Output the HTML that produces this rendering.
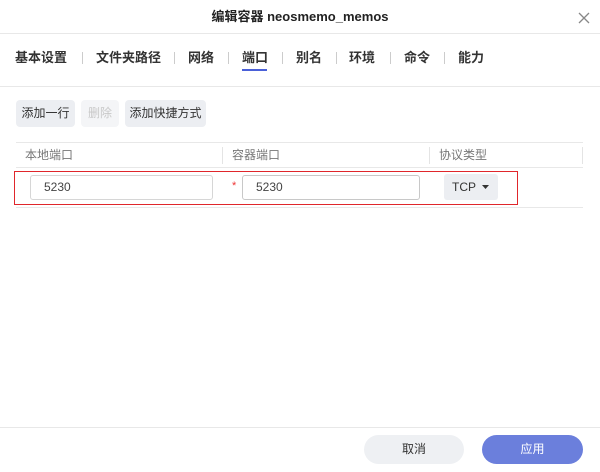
<!DOCTYPE html>
<html><head><meta charset="utf-8"><style>
*{margin:0;padding:0;box-sizing:border-box}
body{width:600px;height:472px;background:#fff;font-family:"Liberation Sans","Noto Sans CJK SC",sans-serif;position:relative;overflow:hidden;color:#333}
.a{position:absolute}
.title{top:8px;left:0;width:600px;text-align:center;font-size:13px;font-weight:bold;color:#222;line-height:18px}
.hr{height:1px;background:#e8e8e8}
.tab{top:49px;font-size:13px;font-weight:bold;color:#333;white-space:nowrap;line-height:18px}
.dv{top:52px;width:1px;height:12px;background:#ccc}
.btn{top:100px;height:27px;background:#eceef2;border-radius:4px;font-size:12px;line-height:27px;text-align:center;color:#333}
.th{top:147px;font-size:12px;color:#777;line-height:16px}
.cd{top:147px;width:1px;height:17px;background:#e4e4e4}
.inp{top:175px;height:25px;border:1px solid #d6d6d6;border-radius:3px;font-size:12px;line-height:23px;padding-left:13px;color:#444}
.fb{top:435px;height:29px;border-radius:15px;font-size:12px;line-height:29px;text-align:center}
</style></head><body>
<div class="a title">编辑容器 neosmemo_memos</div>
<svg class="a" style="left:578px;top:12px" width="12" height="12" viewBox="0 0 12 12"><path d="M1 1L11 11M11 1L1 11" stroke="#888" stroke-width="1.3"/></svg>
<div class="a hr" style="top:33px;left:0;width:600px"></div>

<div class="a tab" style="left:15px">基本设置</div>
<div class="a dv" style="left:82px"></div>
<div class="a tab" style="left:96px">文件夹路径</div>
<div class="a dv" style="left:174px"></div>
<div class="a tab" style="left:188px">网络</div>
<div class="a dv" style="left:228px"></div>
<div class="a tab" style="left:242px">端口</div>
<div class="a" style="left:242px;top:69px;width:25px;height:2px;background:#4a60d8"></div>
<div class="a dv" style="left:282px"></div>
<div class="a tab" style="left:296px">别名</div>
<div class="a dv" style="left:336px"></div>
<div class="a tab" style="left:349px">环境</div>
<div class="a dv" style="left:390px"></div>
<div class="a tab" style="left:404px">命令</div>
<div class="a dv" style="left:444px"></div>
<div class="a tab" style="left:458px">能力</div>
<div class="a hr" style="top:86px;left:0;width:600px"></div>

<div class="a btn" style="left:16px;width:59px">添加一行</div>
<div class="a btn" style="left:81px;width:38px;background:#f4f5f7;color:#c8c8c8">删除</div>
<div class="a btn" style="left:125px;width:81px">添加快捷方式</div>

<div class="a hr" style="top:142px;left:16px;width:567px"></div>
<div class="a th" style="left:25px">本地端口</div>
<div class="a cd" style="left:222px"></div>
<div class="a th" style="left:232px">容器端口</div>
<div class="a cd" style="left:429px"></div>
<div class="a th" style="left:439px">协议类型</div>
<div class="a cd" style="left:582px"></div>
<div class="a hr" style="top:167px;left:16px;width:567px"></div>

<div class="a inp" style="left:30px;width:183px">5230</div>
<div class="a" style="left:232px;top:180px;font-size:11px;color:#e33">*</div>
<div class="a inp" style="left:242px;width:178px;border-color:#c8c8c8">5230</div>
<div class="a" style="left:444px;top:174px;width:54px;height:26px;background:#eceef2;border-radius:3px;font-size:12px;line-height:26px;padding-left:8px;color:#333">TCP<svg style="position:absolute;left:38px;top:11px" width="7" height="4" viewBox="0 0 7 4"><path d="M0 0H7L3.5 4Z" fill="#333"/></svg></div>
<div class="a" style="left:14px;top:171px;width:504px;height:34px;border:1.5px solid #e0262b"></div>
<div class="a hr" style="top:207px;left:16px;width:567px"></div>

<div class="a hr" style="top:427px;left:0;width:600px"></div>
<div class="a fb" style="left:364px;width:100px;background:#eef0f3;color:#333">取消</div>
<div class="a fb" style="left:482px;width:101px;background:#6b7fdc;color:#fff">应用</div>
</body></html>
